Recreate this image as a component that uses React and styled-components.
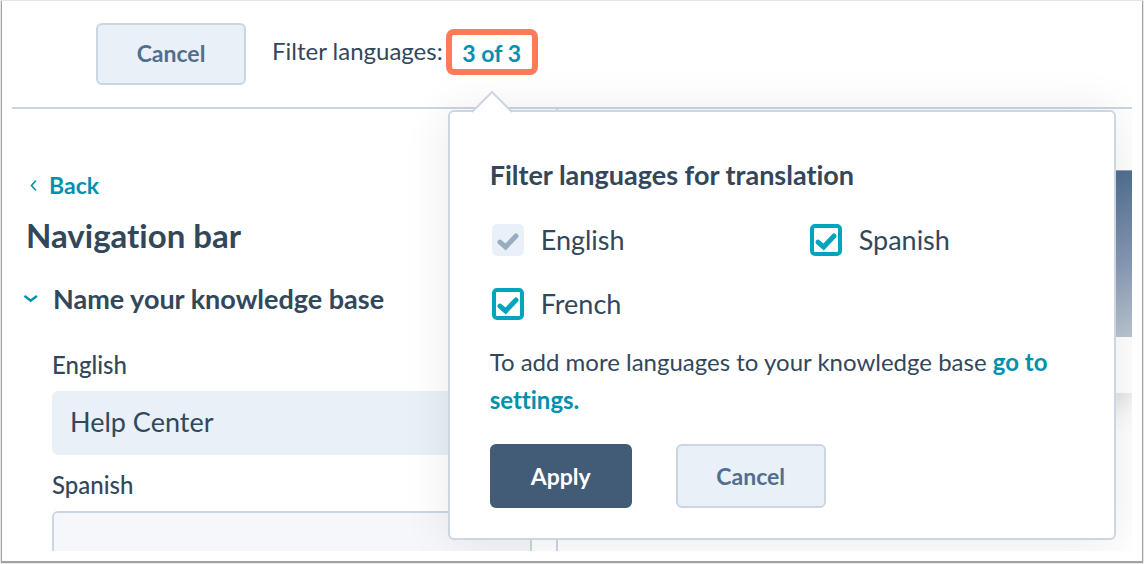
import { useState } from "react";
import styled, { createGlobalStyle } from "styled-components";

const GlobalStyle = createGlobalStyle`
  *, *::before, *::after {
    box-sizing: border-box;
  }

  body {
    margin: 0;
    background: #f2f2f2;
    color: #33475b;
    font-family: Lato, "Open Sans", sans-serif;
    font-size: 24px;
    line-height: 28px;
    font-variant-ligatures: none;
  }

  button, input {
    font: inherit;
    font-variant-ligatures: none;
  }

  h1, h2, h3, p {
    margin: 0;
  }
`;

const Page = styled.div`
  height: 100vh;
  padding: 1px 2px 3px;
  display: flex;
`;

const Frame = styled.div`
  flex: 1;
  min-width: 0;
  display: flex;
  padding: 0 10px 10px;
  background: #fff;
  box-shadow: 0 1px 1px 1px #a3a3a3;
`;

const Screen = styled.div`
  flex: 1;
  min-width: 0;
  display: flex;
  flex-direction: column;
  overflow: hidden;
`;

const TopBar = styled.header`
  display: flex;
  align-items: flex-start;
  padding: 22px 0 22px 84px;
  border-bottom: 2px solid #cbd6e2;
`;

const Button = styled.button`
  min-width: ${(props) => (props.$primary ? "142px" : "150px")};
  height: ${(props) => (props.$tall ? "64px" : "62px")};
  padding: ${(props) => (props.$tall ? "0 24px" : "0 24px 2px")};
  border: 2px solid ${(props) => (props.$primary ? "#425b76" : "#cbd6e2")};
  border-radius: 6px;
  background: ${(props) => (props.$primary ? "#425b76" : "#e9f0f7")};
  color: ${(props) => (props.$primary ? "#fff" : "#506e91")};
  font-size: 23px;
  font-weight: 700;
  cursor: pointer;
`;

const FilterLabel = styled.span`
  margin: 14px 3px 0 26px;
`;

const FilterAnchor = styled.div`
  position: relative;
  margin-top: 6px;
`;

const FilterToggle = styled.button`
  min-width: 92px;
  height: 46px;
  padding: 2px 8px 0;
  border: 6px solid #ff7a59;
  border-radius: 8px;
  background: #fff;
  color: #0091ae;
  font-size: 23px;
  font-weight: 700;
  white-space: nowrap;
  cursor: pointer;
`;

const Popover = styled.section`
  position: absolute;
  z-index: 2;
  top: 81px;
  left: 2px;
  width: 668px;
  padding: 47px 40px 30px;
  border: 2px solid #cbd6e2;
  border-radius: 6px;
  background: #fff;
  box-shadow: 0 2px 48px rgba(0, 0, 0, 0.09);
`;

const Arrow = styled.svg`
  position: absolute;
  top: -21px;
  left: 22px;
  width: 40px;
  height: 22px;
`;

const PopoverTitle = styled.h3`
  font-size: 27px;
  line-height: 32px;
  font-weight: 700;
`;

const Options = styled.div`
  display: grid;
  grid-template-columns: 1fr 1fr;
  gap: 32px 54px;
  padding: 33px 0 0 2px;
`;

const Option = styled.label`
  display: flex;
  align-items: center;
  gap: 17px;
  height: 32px;
  font-size: 27px;
  line-height: 32px;
`;

const CheckBox = styled.span`
  display: grid;
  width: 32px;
  height: 32px;

  input, svg {
    grid-area: 1 / 1;
    width: 32px;
    height: 32px;
    margin: 0;
  }

  input {
    appearance: none;
    border: 4px solid #00a4bd;
    border-radius: 5px;
    background: #fff;
  }

  input:disabled {
    border-color: #e9f0f7;
    background: #e9f0f7;
  }

  svg {
    fill: none;
    stroke: #00a4bd;
    stroke-width: 5;
    stroke-linecap: round;
    pointer-events: none;
  }

  input:disabled + svg {
    stroke: #99acc2;
  }

  input:not(:checked) + svg {
    visibility: hidden;
  }
`;

const Hint = styled.p`
  padding-top: 23px;
  line-height: 38px;
`;

const TextLink = styled.a`
  color: #0091ae;
  font-weight: 700;
  text-decoration: none;
`;

const Actions = styled.div`
  display: flex;
  gap: 44px;
  padding-top: 25px;
`;

const Body = styled.div`
  flex: 1;
  min-height: 0;
  display: flex;
`;

const Sidebar = styled.aside`
  flex: 0 0 544px;
  padding: 62px 24px 0 12px;
`;

const BackLink = styled(TextLink)`
  display: flex;
  align-items: center;
  gap: 12px;
  padding-left: 5px;
  font-size: 23px;

  svg {
    width: 8px;
    height: 12px;
  }
`;

const PageTitle = styled.h1`
  padding: 16px 0 0 2px;
  font-size: 33px;
  line-height: 40px;
  font-weight: 700;
`;

const SectionTitle = styled.h2`
  font-size: 27px;
  line-height: 32px;
  font-weight: 700;
`;

const SectionToggle = styled.button`
  display: flex;
  align-items: center;
  gap: 14px;
  margin-top: 28px;
  padding: 0;
  border: 0;
  background: none;
  color: inherit;
  text-align: left;
  cursor: pointer;

  svg {
    width: 15px;
    height: 10px;
  }
`;

const Fields = styled.div`
  padding-left: 28px;
`;

const FieldLabel = styled.label`
  display: block;
  padding-top: ${(props) => (props.$first ? "36px" : "16px")};
  font-weight: 500;
`;

const TextInput = styled.input`
  display: block;
  width: 100%;
  height: 64px;
  margin-top: 12px;
  padding: 0 16px 4px;
  border: 2px solid ${(props) => (props.$filled ? "#e9f0f7" : "#cbd6e2")};
  border-radius: 6px;
  background: ${(props) => (props.$filled ? "#e9f0f7" : "#f5f7fa")};
  color: #33475b;
  font-size: 27px;
`;

const Preview = styled.main`
  flex: 1;
  min-width: 0;
  padding: 61px 0 0 40px;
  border-left: 2px solid #cbd6e2;
`;

const PreviewCard = styled.div`
  height: 223px;
  background: #fff;
  box-shadow: 0 8px 32px rgba(45, 62, 80, 0.24);
  clip-path: inset(0 0 -48px 0);
`;

const PreviewBanner = styled.div`
  height: 167px;
  border-top: 1px solid #8ea5b4;
  background: linear-gradient(#516f92, #8799b5 55%, #b9c5d0);
`;

const languages = [
  { name: "English", locked: true },
  { name: "Spanish" },
  { name: "French" },
];

const LanguageOption = ({ name, locked, checked, onChange }) => (
  <Option>
    <CheckBox>
      <input type="checkbox" checked={checked} disabled={locked} onChange={onChange} />
      <svg viewBox="0 0 32 32">
        <path d="M8 18.2 L13.6 23 L24 12" />
      </svg>
    </CheckBox>
    {name}
  </Option>
);

const FilterPopover = ({ selected, onToggle, onClose }) => (
  <Popover>
    <Arrow viewBox="0 0 40 22">
      <path d="M0 22 L20 2 L40 22 Z" fill="#fff" />
      <path d="M0 21 L20 1 L40 21" fill="none" stroke="#cbd6e2" strokeWidth="2" />
    </Arrow>
    <PopoverTitle>Filter languages for translation</PopoverTitle>
    <Options>
      {languages.map((lang) => (
        <LanguageOption
          key={lang.name}
          {...lang}
          checked={selected.includes(lang.name)}
          onChange={() => onToggle(lang.name)}
        />
      ))}
    </Options>
    <Hint>
      To add more languages to your knowledge base{" "}
      <TextLink href="#settings">go to settings.</TextLink>
    </Hint>
    <Actions>
      <Button $primary $tall type="button" onClick={onClose}>Apply</Button>
      <Button $tall type="button" onClick={onClose}>Cancel</Button>
    </Actions>
  </Popover>
);

export default function App() {
  const [open, setOpen] = useState(true);
  const [selected, setSelected] = useState(languages.map((lang) => lang.name));

  const toggleLanguage = (name) => {
    setSelected((current) =>
      current.includes(name) ? current.filter((n) => n !== name) : [...current, name]
    );
  };

  return (
    <>
      <GlobalStyle />
      <Page>
        <Frame>
          <Screen>
            <TopBar>
              <Button type="button">Cancel</Button>
              <FilterLabel>Filter languages:</FilterLabel>
              <FilterAnchor>
                <FilterToggle type="button" onClick={() => setOpen(!open)}>
                  {selected.length} of {languages.length}
                </FilterToggle>
                {open && (
                  <FilterPopover
                    selected={selected}
                    onToggle={toggleLanguage}
                    onClose={() => setOpen(false)}
                  />
                )}
              </FilterAnchor>
            </TopBar>
            <Body>
              <Sidebar>
                <BackLink href="#back">
                  <svg viewBox="0 0 8 12" fill="none" stroke="currentColor" strokeWidth="1.6">
                    <path d="M6.5 2 L2.5 6.5 L6.5 11" strokeLinecap="round" />
                  </svg>
                  Back
                </BackLink>
                <PageTitle>Navigation bar</PageTitle>
                <SectionToggle type="button">
                  <svg viewBox="0 0 15 10" fill="none" stroke="#0091ae" strokeWidth="2.4">
                    <path d="M1.3 2.5 L6.7 6.8 L12.2 2.5" strokeLinecap="round" />
                  </svg>
                  <SectionTitle as="span">Name your knowledge base</SectionTitle>
                </SectionToggle>
                <Fields>
                  <FieldLabel $first htmlFor="name-en">English</FieldLabel>
                  <TextInput $filled id="name-en" type="text" defaultValue="Help Center" />
                  <FieldLabel htmlFor="name-es">Spanish</FieldLabel>
                  <TextInput id="name-es" type="text" />
                </Fields>
              </Sidebar>
              <Preview>
                <PreviewCard>
                  <PreviewBanner />
                </PreviewCard>
              </Preview>
            </Body>
          </Screen>
        </Frame>
      </Page>
    </>
  );
}
